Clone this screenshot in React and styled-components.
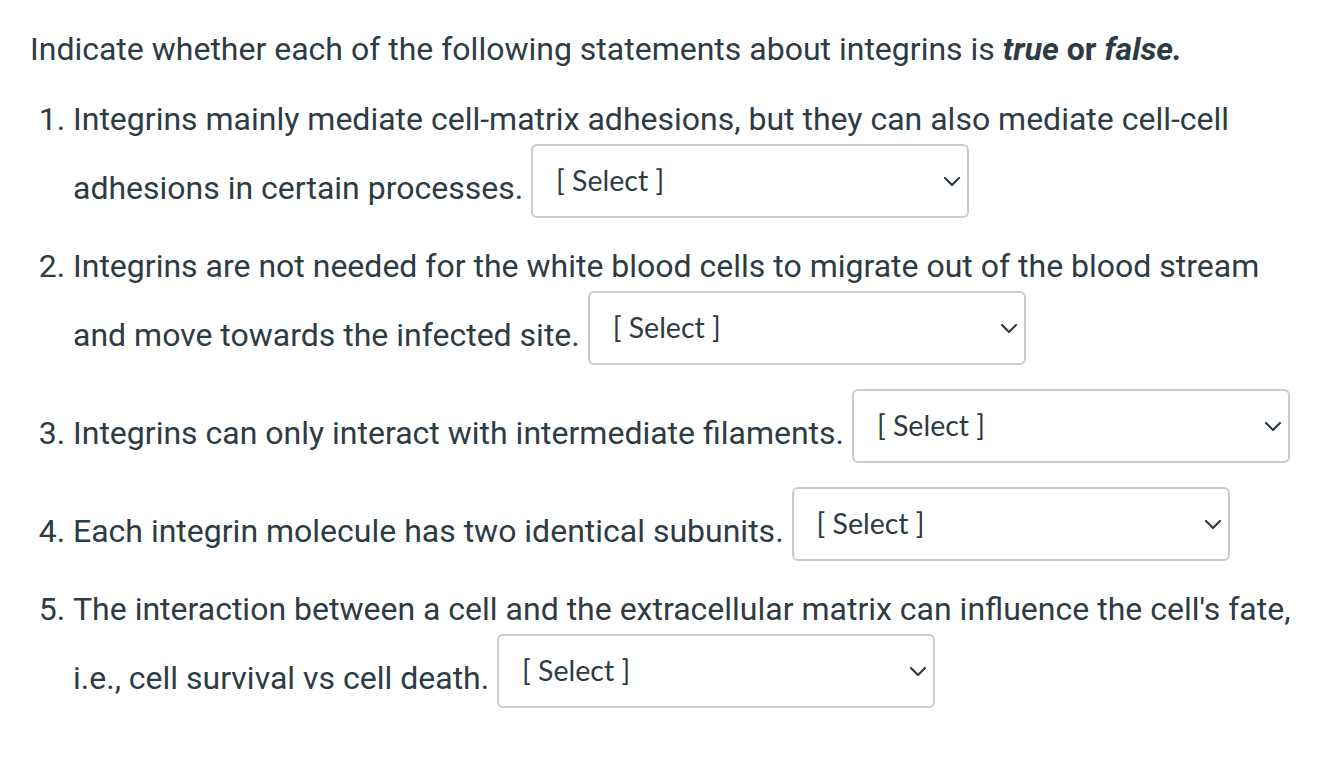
import React from "react";
import styled, { createGlobalStyle } from "styled-components";

const Global = createGlobalStyle`
  html, body { margin: 0; padding: 0; background: #ffffff; }
  body { font-family: Roboto, "Liberation Sans", sans-serif; color: #2d3b45; }
`;

const Page = styled.div`
  padding: 25px 20px 0 30px;
  width: 1328px;
  box-sizing: border-box;
  font-size: 32px;
  line-height: 49px;
`;

const Lead = styled.p`
  margin: 0 0 21px 0;
`;

const Strong = styled.strong`
  font-weight: 700;
  font-style: ${(p) => (p.$italic ? "italic" : "normal")};
`;

const List = styled.ol`
  margin: 0;
  padding-left: 43px;
`;

const Item = styled.li`
  margin-bottom: 24px;
`;

const Dropdown = styled.span`
  display: inline-flex;
  align-items: center;
  justify-content: space-between;
  box-sizing: border-box;
  width: 438px;
  height: 74px;
  margin-left: 0;
  padding: 0 6px 0 23px;
  border: 2px solid #c8ccd0;
  border-radius: 6px;
  background: #fff;
  vertical-align: 8px;
  font-family: Lato, "Open Sans", sans-serif;
  font-size: 28.5px;
  line-height: 1;
  color: #2d3b45;
`;

const Placeholder = styled.span`
  padding-bottom: 2px;
`;

const Chevron = () => (
  <svg width="18" height="11" viewBox="0 0 18 11" fill="none">
    <path d="M2 2 L9 9 L16 2" stroke="#2d3b45" strokeWidth="2.2" strokeLinecap="round" strokeLinejoin="round" />
  </svg>
);

const Select = () => (
  <Dropdown role="combobox">
    <Placeholder>[ Select ]</Placeholder>
    <Chevron />
  </Dropdown>
);

const items = [
  "Integrins mainly mediate cell-matrix adhesions, but they can also mediate cell-cell adhesions in certain processes.",
  "Integrins are not needed for the white blood cells to migrate out of the blood stream and move towards the infected site.",
  "Integrins can only interact with intermediate filaments.",
  "Each integrin molecule has two identical subunits.",
  "The interaction between a cell and the extracellular matrix can influence the cell's fate, i.e., cell survival vs cell death.",
];

export default function App() {
  return (
    <>
      <Global />
      <Page>
        <Lead>
          Indicate whether each of the following statements about integrins is{" "}
          <Strong $italic>true</Strong> <Strong>or</Strong> <Strong $italic>false.</Strong>
        </Lead>
        <List>
          {items.map((t, i) => (
            <Item key={i}>
              {t} <Select />
            </Item>
          ))}
        </List>
      </Page>
    </>
  );
}
